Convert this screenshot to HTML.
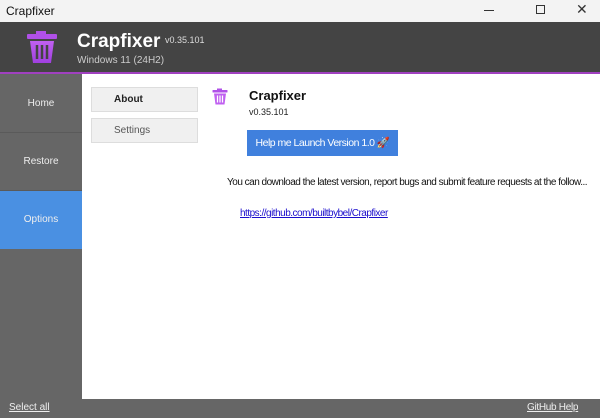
<!DOCTYPE html>
<html><head><style>
*{margin:0;padding:0;box-sizing:border-box}
body{width:600px;height:418px;overflow:hidden;font-family:"Liberation Sans",sans-serif;background:#fff;position:relative}
.a{position:absolute}
.tb{left:0;top:0;width:600px;height:22px;background:#f3f3f3;font-size:12px;color:#111}
.hd{left:0;top:22px;width:600px;height:52px;background:#444;border-bottom:2px solid #a040c0}
.sb{left:0;top:74px;width:82px;height:326px;background:#666}
.nav{left:0;width:82px;height:58px;color:#eee;font-size:10px;text-align:center;line-height:58px;border-bottom:1px solid #5a5a5a}
.ft{left:0;top:399px;width:600px;height:19px;background:#666;font-size:10px;color:#eee}
.btn{left:91px;width:107px;height:25px;background:#f0f0f0;border:1px solid #ddd;font-size:10px;padding-left:22px;line-height:23px}
.c{letter-spacing:-0.5px;white-space:nowrap}
</style></head><body>
<div class="a tb"><span class="a" style="left:6px;top:4px">Crapfixer</span>
<span class="a" style="left:484px;top:10px;width:10px;border-top:1px solid #333"></span>
<span class="a" style="left:536px;top:5px;width:9px;height:9px;border:1px solid #333"></span>
<span class="a" style="left:576px;top:1px;font-size:14px;color:#333">✕</span></div>
<div class="a hd">
<svg class="a" style="left:24px;top:8px" width="36" height="36" viewBox="0 0 36 36"><defs><linearGradient id="g" x1="0" y1="0" x2="0" y2="1"><stop offset="0" stop-color="#c060f0"/><stop offset="1" stop-color="#a040e0"/></linearGradient></defs><rect x="12" y="1" width="10" height="4" fill="#b050e8"/><rect x="3" y="4" width="30" height="5" rx="1" fill="#b050e8"/><path d="M6 11h24l-3 22H9z" fill="url(#g)"/><path d="M13 15v14M18 15v14M23 15v14" stroke="#444" stroke-width="2.5"/></svg>
<span class="a" style="left:77px;top:9px;font-size:19px;font-weight:bold;color:#fff">Crapfixer</span>
<span class="a" style="left:165px;top:13px;font-size:9px;color:#ddd">v0.35.101</span>
<span class="a" style="left:77px;top:33px;font-size:10px;color:#ccc">Windows 11 (24H2)</span>
</div>
<div class="a sb"></div>
<div class="a nav" style="top:75px">Home</div>
<div class="a nav" style="top:133px">Restore</div>
<div class="a nav" style="top:191px;background:#4a90e2;border:none">Options</div>
<div class="a btn" style="top:87px;font-weight:bold;color:#222">About</div>
<div class="a btn" style="top:118px;color:#555">Settings</div>
<svg class="a" style="left:211px;top:88px" width="18" height="18" viewBox="0 0 36 36"><rect x="12" y="1" width="10" height="4" fill="#b050e8"/><rect x="3" y="4" width="30" height="5" rx="1" fill="#b050e8"/><path d="M6 11h24l-3 22H9z" fill="#c060f0"/><path d="M13 15v14M18 15v14M23 15v14" stroke="#fff" stroke-width="2.5"/></svg>
<span class="a" style="left:249px;top:88px;font-size:13px;font-weight:bold;color:#111">Crapfixer</span>
<span class="a" style="left:249px;top:107px;font-size:9px;color:#222">v0.35.101</span>
<div class="a c" style="left:247px;top:130px;width:151px;height:26px;background:#4080dd;color:#fff;font-size:10.5px;text-align:center;line-height:26px">Help me Launch Version 1.0 🚀</div>
<span class="a c" style="left:227px;top:177px;font-size:10px;color:#111">You can download the latest version, report bugs and submit feature requests at the follow...</span>
<span class="a c" style="left:240px;top:208px;font-size:10px;color:#1a0dcc;text-decoration:underline">https://github.com/builtbybel/Crapfixer</span>
<div class="a ft"><span class="a" style="left:9px;top:3px;text-decoration:underline">Select all</span><span class="a" style="left:527px;top:3px;text-decoration:underline;letter-spacing:-0.3px">GitHub Help</span></div>
</body></html>
